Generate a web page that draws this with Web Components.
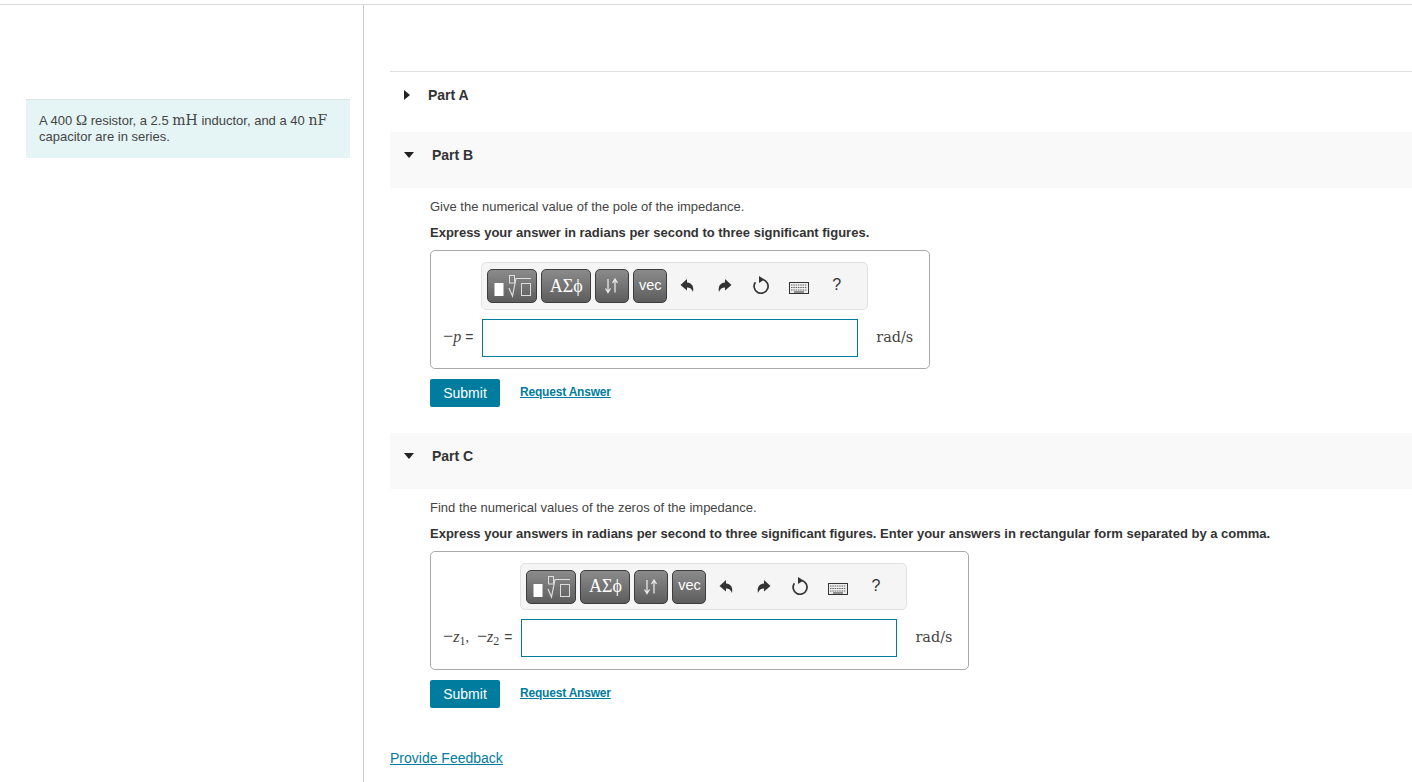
<!DOCTYPE html>
<html lang="en">
<head>
<meta charset="utf-8">
<title>Part B and Part C</title>
<style>
html, body { margin: 0; padding: 0; background: #fff; }
body { font-family: "Liberation Sans", Arial, sans-serif; color: #333; overflow: hidden; height: 782px; }
.m { font-family: "DejaVu Serif", serif; font-size: 14px; line-height: 0; }
.o { font-family: "Liberation Serif", serif; font-size: 15px; line-height: 0; }
.v { font-family: "Liberation Serif", serif; font-style: italic; font-size: 16px; }
.n { font-family: "Liberation Serif", serif; font-size: 18px; line-height: 0; }
.c { font-family: "Liberation Serif", serif; font-size: 14px; margin-right: 8px; }
.s { font-family: "Liberation Serif", serif; font-size: 12px; vertical-align: -3px; line-height: 0; }
.sm { font-size: 14px; margin-left: 4px; }
</style>
</head>
<body>

<item-page>
  <problem-note slot="side">
    A 400 <span class="o">Ω</span> resistor, a 2.5 <span class="m">mH</span> inductor, and a 40 <span class="m">nF</span> capacitor are in series.
  </problem-note>

  <item-part title="Part A" style="--head-h:60px;--head-bg:transparent;--title-left:38px;--rule:1px solid #e0e0e0"></item-part>

  <item-part title="Part B" open>
    <span slot="prompt">Give the numerical value of the pole of the impedance.</span>
    <span slot="instruction">Express your answer in radians per second to three significant figures.</span>
    <answer-box>
      <span slot="label"><span class="n">−</span><span class="v">p</span><span class="sm">=</span></span>
    </answer-box>
  </item-part>

  <item-part title="Part C" open style="--top-gap:26px">
    <span slot="prompt">Find the numerical values of the zeros of the impedance.</span>
    <span slot="instruction">Express your answers in radians per second to three significant figures. Enter your answers in rectangular form separated by a comma.</span>
    <answer-box style="--bar-h:47px;--box-pb:12px">
      <span slot="label"><span class="n">−</span><span class="v">z</span><span class="s">1</span><span class="c">,</span><span class="n">−</span><span class="v">z</span><span class="s">2</span><span class="sm" style="margin-left:5px">=</span></span>
    </answer-box>
  </item-part>

  <a slot="feedback" href="#" style="color:#007c9e;font-size:14px">Provide Feedback</a>
</item-page>

<script>
function tpl(html) {
  const t = document.createElement('template');
  t.innerHTML = html;
  return t;
}

const pageTemplate = tpl(`
<style>
:host { display: block; box-sizing: border-box; height: 782px; padding-top: 4px; }
.top { border-top: 1px solid #ddd; display: grid; grid-template-columns: 364px 1fr; height: 777px; }
.side { border-right: 1px solid #c3ccd1; padding: 94px 13px 0 26px; }
.main { padding: 66px 0 0 26px; min-width: 0; }
.feedback { margin-top: 42px; line-height: 16px; }
</style>
<div class="top">
  <div class="side"><slot name="side"></slot></div>
  <div class="main">
    <slot></slot>
    <div class="feedback"><slot name="feedback"></slot></div>
  </div>
</div>`);

class ItemPage extends HTMLElement {
  constructor() {
    super();
    this.attachShadow({ mode: 'open' }).appendChild(pageTemplate.content.cloneNode(true));
  }
}
customElements.define('item-page', ItemPage);

const noteTemplate = tpl(`
<style>
:host {
  display: block;
  background: #e5f4f5;
  border-top: 1px solid #dbe5e5;
  padding: 13px 13px 13px;
  font-size: 13px;
  line-height: 16px;
  color: #444;
}
</style>
<slot></slot>`);

class ProblemNote extends HTMLElement {
  constructor() {
    super();
    this.attachShadow({ mode: 'open' }).appendChild(noteTemplate.content.cloneNode(true));
  }
}
customElements.define('problem-note', ProblemNote);

const partTemplate = tpl(`
<style>
:host { display: block; border-top: var(--rule, none); margin-top: var(--top-gap, 0); }
.head {
  height: var(--head-h, 56px);
  background: var(--head-bg, #f9f9f9);
  display: flex;
  align-items: center;
  box-sizing: border-box;
  position: relative;
  font-size: 14px;
  font-weight: bold;
  color: #333;
  padding-left: var(--title-left, 42px);
  padding-bottom: 10px;
}
.head svg { position: absolute; }
:host(:not([open])) .head { align-items: flex-start; padding-top: 15px; padding-bottom: 0; }
.body { padding: 11px 0 0 40px; font-size: 13px; }
:host(:not([open])) .body { display: none; }
.prompt { line-height: 16px; color: #444; }
.instruction { line-height: 16px; margin-top: 10px; font-weight: bold; color: #333; margin-bottom: 9px; white-space: nowrap; }
</style>
<div class="head"><span id="arrow"></span><span id="title"></span></div>
<div class="body">
  <div class="prompt"><slot name="prompt"></slot></div>
  <div class="instruction"><slot name="instruction"></slot></div>
  <slot></slot>
</div>`);

class ItemPart extends HTMLElement {
  constructor() {
    super();
    this.attachShadow({ mode: 'open' }).appendChild(partTemplate.content.cloneNode(true));
  }
  connectedCallback() {
    this.shadowRoot.getElementById('title').textContent = this.getAttribute('title');
    // title attr only feeds the heading, no tooltip wanted
    this.removeAttribute('title');
    const open = this.hasAttribute('open');
    this.shadowRoot.getElementById('arrow').innerHTML = open
      ? '<svg width="12" height="7" style="left:13px;top:20px"><path d="M1 0h10L6 6z" fill="#222"/></svg>'
      : '<svg width="8" height="12" style="left:13px;top:18px"><path d="M1 0v10L7 5z" fill="#222"/></svg>';
  }
}
customElements.define('item-part', ItemPart);

const toolbarTemplate = tpl(`
<style>
:host {
  display: flex;
  align-items: center;
  box-sizing: border-box;
  width: 387px;
  height: var(--bar-h, 48px);
  background: #f5f5f5;
  border: 1px solid #e2e2e2;
  border-radius: 5px;
  padding: 0 0 0 5px;
}
.b {
  box-sizing: border-box;
  height: 34px;
  margin-right: 4px;
  background: linear-gradient(#8b8b8b, #5d5d5d);
  border: 1px solid #3d3d3d;
  border-radius: 5px;
  color: #fff;
  display: flex;
  align-items: center;
  justify-content: center;
}
.tmpl { width: 50px; }
.greek { width: 50px; font: 18px "Liberation Serif", serif; }
.arr { width: 34px; }
.vec { width: 34px; font: 14.5px "Liberation Sans", sans-serif; padding-bottom: 3px; }
.tools { position: relative; flex: 1; height: 100%; color: #333; }
.tools svg, .tools span { position: absolute; }
</style>
<div class="b tmpl">
  <svg width="48" height="32" viewBox="0 0 48 32">
    <rect x="6.500" y="13" width="9" height="13" fill="#fff"/>
    <rect x="21.500" y="5.500" width="5" height="7.500" fill="none" stroke="#ddd"/>
    <path d="M21 18l3.500 8 3.500-17.500h15" fill="none" stroke="#ddd" stroke-width="1.200"/>
    <rect x="33.500" y="13.500" width="9" height="12" fill="none" stroke="#ddd"/>
  </svg>
</div>
<div class="b greek">ΑΣϕ</div>
<div class="b arr"><svg width="20" height="20" viewBox="0 0 20 20"><path d="M6 3v13.500M3.500 12.500L6 16.500 8.500 12.500M13 16.500V3M10.500 7L13 3l2.500 4" fill="none" stroke="#e8e8e8" stroke-width="1.300"/></svg></div>
<div class="b vec">vec</div>
<div class="tools">
  <svg style="left:9px;top:15px" width="16" height="16" viewBox="0 0 16 16"><path d="M7 1L.5 7 7 12.500V9.500c2.500 0 4.500.8 6 4.500 1-5-.5-9-6-9.500z" fill="#333"/></svg>
  <svg style="left:45px;top:15px" width="16" height="16" viewBox="0 0 16 16"><path d="M9 1l6.500 6L9 12.500V9.500c-2.500 0-4.500.8-6 4.500-1-5 .5-9 6-9.500z" fill="#333"/></svg>
  <svg style="left:80px;top:12px" width="20" height="20" viewBox="0 0 20 20"><path d="M6 5.500a7 7 0 1 0 8 0" fill="none" stroke="#333" stroke-width="1.700" transform="rotate(-20 10 11)"/><path d="M8 1l5.500 3.500L8 8z" fill="#333"/></svg>
  <svg style="left:118px;top:19px" width="20" height="14" viewBox="0 0 20 14"><rect x=".5" y=".5" width="19" height="11" fill="#eee" stroke="#333"/><path d="M2 3h16M2 5.500h16M2 8h16" stroke="#666" stroke-dasharray="1.500 .8" fill="none"/><path d="M5 10h10" stroke="#333"/></svg>
  <span style="left:161px;top:13px;font:16px 'Liberation Sans',sans-serif">?</span>
</div>`);

class MathToolbar extends HTMLElement {
  constructor() {
    super();
    this.attachShadow({ mode: 'open' }).appendChild(toolbarTemplate.content.cloneNode(true));
  }
}
customElements.define('math-toolbar', MathToolbar);

const answerTemplate = tpl(`
<style>
:host { display: block; }
.box {
  box-sizing: border-box;
  width: fit-content;
  border: 1px solid #aaa;
  border-radius: 5px;
  padding: 11px 16px var(--box-pb, 11px) 12px;
  display: grid;
  grid-template-columns: auto 376px auto;
  row-gap: 9px;
  align-items: center;
  color: #444;
}
math-toolbar { grid-column: 2; grid-row: 1; margin-left: -1px; }
.label { grid-row: 2; white-space: nowrap; padding-right: 9px; padding-bottom: 2px; }
.input { grid-row: 2; height: 38px; box-sizing: border-box; border: 1px solid #007c9e; background: #fff; }
.unit { grid-row: 2; font: 14.4px "DejaVu Serif", serif; padding-left: 18px; padding-bottom: 2px; color: #444; }
.actions { display: flex; align-items: center; margin-top: 10px; }
.submit {
  width: 70px; height: 28px;
  background: #007c9e;
  color: #fff;
  border-radius: 2px;
  font-size: 14px;
  display: flex; align-items: center; justify-content: center;
}
a { margin-left: 20px; color: #007c9e; font-size: 12px; letter-spacing: -0.2px; font-weight: bold; margin-bottom: 3px; }
</style>
<div class="box">
  <math-toolbar></math-toolbar>
  <div class="label"><slot name="label"></slot></div>
  <div class="input"></div>
  <div class="unit">rad/s</div>
</div>
<div class="actions">
  <div class="submit">Submit</div>
  <a href="#">Request Answer</a>
</div>`);

class AnswerBox extends HTMLElement {
  constructor() {
    super();
    this.attachShadow({ mode: 'open' }).appendChild(answerTemplate.content.cloneNode(true));
  }
}
customElements.define('answer-box', AnswerBox);
</script>
</body>
</html>
